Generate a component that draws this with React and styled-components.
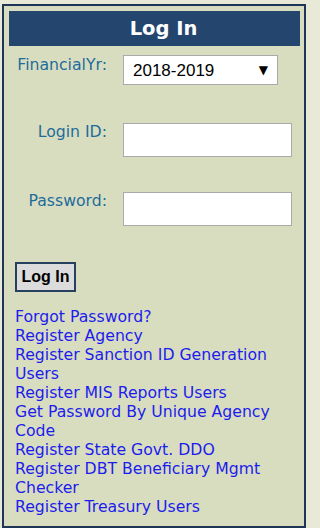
import React, { useState } from "react";
import styled, { createGlobalStyle } from "styled-components";

const GlobalStyle = createGlobalStyle`
  html, body {
    margin: 0;
    padding: 0;
    background: #e8e9d7;
  }
  body {
    font-family: "DejaVu Sans", Verdana, sans-serif;
  }
  * { box-sizing: border-box; }
`;

const Page = styled.div`
  padding: 4px 0 0 2px;
`;

const Panel = styled.div`
  width: 304px;
  height: 524px;
  border: 2px solid #1f3656;
  background: #d9ddbf;
  padding: 5px 4px 0 5px;
`;

const Header = styled.div`
  height: 35px;
  background: #24466e;
  color: #fff;
  font-weight: bold;
  font-size: 19.5px;
  display: flex;
  align-items: center;
  justify-content: center;
  padding-left: 18px;
`;

const Form = styled.div`
  display: grid;
  grid-template-columns: 98px 1fr;
  column-gap: 16px;
  row-gap: 35px;
  margin-top: 9px;
  align-items: start;
`;

const Label = styled.label`
  text-align: right;
  color: #1d6c9c;
  font-size: 15.7px;
  line-height: 18px;
  white-space: nowrap;
  padding-top: ${(p) => p.$top || 0}px;
`;

const SelectBox = styled.div`
  width: 155px;
  height: 30px;
  margin-bottom: 3px;
  background: #fff;
  border: 1px solid #aaa;
  display: flex;
  align-items: center;
  padding: 0 9px 0 9px;
`;

const Select = styled.select`
  flex: 1;
  appearance: none;
  border: none;
  background: transparent;
  outline: none;
  font-family: "Liberation Sans", Arial, sans-serif;
  font-size: 17px;
  color: #000;
  padding: 0;
`;

const Arrow = styled.span`
  font-family: "DejaVu Sans", sans-serif;
  font-size: 12px;
  color: #000;
`;

const Input = styled.input`
  width: 169px;
  height: 34px;
  border: 1px solid #aaa;
  background: #fff;
  outline: none;
  font-size: 15px;
`;

const Button = styled.button`
  display: block;
  margin: 36px 0 0 6px;
  width: 61px;
  height: 30px;
  background: #dcdcdc;
  border: 2px solid #27405f;
  font-family: "Liberation Sans", Arial, sans-serif;
  font-weight: bold;
  font-size: 16px;
  color: #000;
  padding: 0;
  cursor: pointer;
`;

const Links = styled.div`
  margin: 15px 0 0 6px;
  padding-right: 6px;
`;

const LinkItem = styled.a`
  display: block;
  color: #1c1cee;
  font-size: 15.7px;
  line-height: 19px;
  text-decoration: none;
  &:hover { text-decoration: underline; }
`;

const links = [
  "Forgot Password?",
  "Register Agency",
  "Register Sanction ID Generation Users",
  "Register MIS Reports Users",
  "Get Password By Unique Agency Code",
  "Register State Govt. DDO",
  "Register DBT Beneficiary Mgmt Checker",
  "Register Treasury Users",
];

export default function App() {
  const [year, setYear] = useState("2018-2019");
  const [loginId, setLoginId] = useState("");
  const [password, setPassword] = useState("");

  return (
    <Page>
      <GlobalStyle />
      <Panel>
        <Header>Log In</Header>
        <Form>
          <Label $top={1}>FinancialYr:</Label>
          <SelectBox>
            <Select value={year} onChange={(e) => setYear(e.target.value)}>
              <option>2018-2019</option>
              <option>2017-2018</option>
              <option>2016-2017</option>
            </Select>
            <Arrow>▼</Arrow>
          </SelectBox>
          <Label>Login ID:</Label>
          <Input value={loginId} onChange={(e) => setLoginId(e.target.value)} />
          <Label>Password:</Label>
          <Input
            type="password"
            value={password}
            onChange={(e) => setPassword(e.target.value)}
          />
        </Form>
        <Button>Log In</Button>
        <Links>
          {links.map((l) => (
            <LinkItem key={l} href="#" onClick={(e) => e.preventDefault()}>
              {l}
            </LinkItem>
          ))}
        </Links>
      </Panel>
    </Page>
  );
}
